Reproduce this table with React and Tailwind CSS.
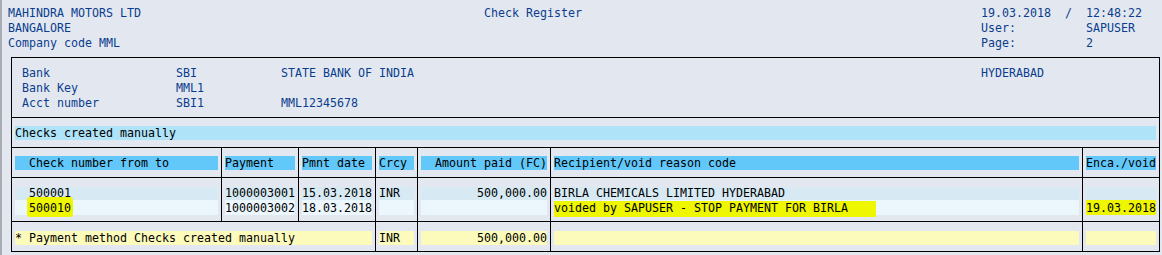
import React from 'react';

// character grid: 7px per cell, lines 15px tall
const BLUE = 'text-[#0b3d8e]';

const COLS = ['w-[203px]', 'w-[70px]', 'w-[70px]', 'w-[35px]', 'w-[126px]', 'w-[525px]', 'w-[70px]'];
const FOOT_COLS = ['w-[357px]', 'w-[35px]', 'w-[126px]', 'w-[525px]', 'w-[70px]'];
const BOX = ['w-[1141px]'];

const VLine = () => (
  <div className="flex w-[7px] shrink-0 justify-center">
    <div className="w-px bg-black" />
  </div>
);

const Joint = ({ up, down, left, right, at }) => (
  <div className="flex w-[7px] shrink-0 flex-col">
    <div className={`flex justify-center ${at === 6 ? 'h-[6px]' : 'h-[7px]'}`}>
      {up && <div className="w-px bg-black" />}
    </div>
    <div className="flex h-px">
      <div className={`w-[3px] ${left ? 'bg-black' : ''}`} />
      <div className="w-px bg-black" />
      <div className={`w-[3px] ${right ? 'bg-black' : ''}`} />
    </div>
    <div className="flex flex-1 justify-center">{down && <div className="w-px bg-black" />}</div>
  </div>
);

const Divider = ({ cols, joints, at = 7 }) => (
  <div className="flex h-[15px]">
    {cols.map((w, i) => (
      <React.Fragment key={i}>
        <Joint {...joints[i]} at={at} />
        <div className={`${w} flex shrink-0 flex-col`}>
          <div className={at === 6 ? 'h-[6px]' : 'h-[7px]'} />
          <div className="h-px bg-black" />
        </div>
      </React.Fragment>
    ))}
    <Joint {...joints[cols.length]} at={at} />
  </div>
);

const edges = (n, first, mid, last) => [first, ...Array(n - 1).fill(mid), last];

// one table line; cells = [{ text, bg, cls }]
const TableRow = ({ cols, cells, pad = 'pt-px', bar = 'h-[14px] leading-[14px]' }) => (
  <div className="flex h-[15px]">
    {cols.map((w, i) => {
      const c = cells[i] || {};
      return (
        <React.Fragment key={i}>
          <VLine />
          <div className={`${w} shrink-0 ${pad}`}>
            <div className={`${bar} whitespace-pre ${c.bg || ''} ${c.cls || ''}`}>{c.text}</div>
          </div>
        </React.Fragment>
      );
    })}
    <VLine />
  </div>
);

const Marker = ({ children, box }) => (
  <span className="relative inline-block">
    <span className={`absolute bg-[#eef600] ${box}`} />
    <span className="relative">{children}</span>
  </span>
);

const HEAD = 'bg-[#62c8fa]';
const ROW1 = 'bg-[#d7eaf4]';
const ROW2 = 'bg-[#ecf7fd]';
const SUM = 'bg-[#fdfbbb]';

export default function App() {
  return (
    <div className="h-[255px] w-[1162px] overflow-hidden border-l-2 border-[#a9adb3] bg-[#e3e8f0] pl-[6px] pt-[5px] font-['DejaVu_Sans_Mono',monospace] text-[11.63px] leading-[14px] text-black">
      {/* report header */}
      <div className={`flex ${BLUE}`}>
        <div className="w-[476px] shrink-0">
          <div className="h-[15px] pt-px">MAHINDRA MOTORS LTD</div>
          <div className="h-[15px] pt-px">BANGALORE</div>
          <div className="h-[15px] pt-px">Company code MML</div>
        </div>
        <div className="w-[497px] shrink-0">
          <div className="h-[15px] pt-px">Check Register</div>
        </div>
        <div className="w-[105px] shrink-0 whitespace-pre">
          <div className="h-[15px] pt-px">19.03.2018  /</div>
          <div className="h-[15px] pt-px">User:</div>
          <div className="h-[15px] pt-px">Page:</div>
        </div>
        <div>
          <div className="h-[15px] pt-px">12:48:22</div>
          <div className="h-[15px] pt-px">SAPUSER</div>
          <div className="h-[15px] pt-px">2</div>
        </div>
      </div>

      {/* bank block */}
      <Divider cols={BOX} joints={[{ down: true, right: true }, { down: true, left: true }]} />
      {[
        ['Bank', 'SBI', 'STATE BANK OF INDIA', 'HYDERABAD'],
        ['Bank Key', 'MML1', '', ''],
        ['Acct number', 'SBI1', 'MML12345678', ''],
      ].map((r) => (
        <div key={r[0]} className="flex h-[15px]">
          <VLine />
          <div className={`flex w-[1141px] shrink-0 pl-[7px] pt-px ${BLUE}`}>
            <div className="w-[154px] shrink-0">{r[0]}</div>
            <div className="w-[105px] shrink-0">{r[1]}</div>
            <div className="w-[700px] shrink-0">{r[2]}</div>
            <div>{r[3]}</div>
          </div>
          <VLine />
        </div>
      ))}
      <Divider cols={BOX} joints={[{ up: true, down: true, right: true }, { up: true, down: true, left: true }]} />
      <TableRow cols={BOX} cells={[{ text: 'Checks created manually', bg: 'bg-[#afe3f8]' }]} />
      <Divider
        cols={COLS}
        joints={edges(7, { up: true, down: true, right: true }, { down: true, left: true, right: true }, { up: true, down: true, left: true })}
      />

      {/* checks table */}
      <TableRow
        cols={COLS}
        cells={[
          { text: 'Check number from to', bg: HEAD, cls: 'pl-[14px]' },
          { text: 'Payment', bg: HEAD },
          { text: 'Pmnt date', bg: HEAD },
          { text: 'Crcy', bg: HEAD },
          { text: 'Amount paid (FC)', bg: HEAD, cls: 'text-right' },
          { text: 'Recipient/void reason code', bg: HEAD },
          { text: 'Enca./void', bg: HEAD },
        ]}
      />
      <Divider
        cols={COLS}
        joints={edges(7, { up: true, down: true, right: true }, { up: true, down: true, left: true, right: true }, { up: true, down: true, left: true })}
      />
      <TableRow
        cols={COLS}
        pad="pt-[2px]"
        bar="h-[13px] leading-[12px]"
        cells={[
          { text: '500001', bg: ROW1, cls: 'pl-[14px]' },
          { text: '1000003001', bg: ROW1 },
          { text: '15.03.2018', bg: ROW1 },
          { text: 'INR', bg: ROW1 },
          { text: '500,000.00', bg: ROW1, cls: 'text-right' },
          { text: 'BIRLA CHEMICALS LIMITED HYDERABAD', bg: ROW1 },
          { text: '', bg: ROW1 },
        ]}
      />
      <TableRow
        cols={COLS}
        pad="pt-0"
        bar="h-[15px] leading-[16px]"
        cells={[
          {
            text: <Marker box="-left-[2px] -right-[2px] -top-[3px] -bottom-px rounded-[3px]">500010</Marker>,
            bg: ROW2,
            cls: 'pl-[14px]',
          },
          { text: '1000003002', bg: ROW2 },
          { text: '18.03.2018', bg: ROW2 },
          { text: '', bg: ROW2 },
          { text: '', bg: ROW2 },
          {
            text: <Marker box="left-0 -right-[28px] top-px -bottom-px">voided by SAPUSER - STOP PAYMENT FOR BIRLA</Marker>,
            bg: ROW2,
          },
          { text: '19.03.2018', bg: 'bg-[#eef600]' },
        ]}
      />
      <Divider
        cols={COLS}
        at={6}
        joints={[
          { up: true, down: true, right: true },
          { up: true, left: true, right: true },
          { up: true, left: true, right: true },
          { up: true, down: true, left: true, right: true },
          { up: true, down: true, left: true, right: true },
          { up: true, down: true, left: true, right: true },
          { up: true, down: true, left: true, right: true },
          { up: true, down: true, left: true },
        ]}
      />
      <TableRow
        cols={FOOT_COLS}
        cells={[
          { text: '* Payment method Checks created manually', bg: SUM },
          { text: 'INR', bg: SUM },
          { text: '500,000.00', bg: SUM, cls: 'text-right' },
          { text: '', bg: SUM },
          { text: '', bg: SUM },
        ]}
      />
      <Divider
        cols={FOOT_COLS}
        at={6}
        joints={edges(5, { up: true, right: true }, { up: true, left: true, right: true }, { up: true, left: true })}
      />
    </div>
  );
}
